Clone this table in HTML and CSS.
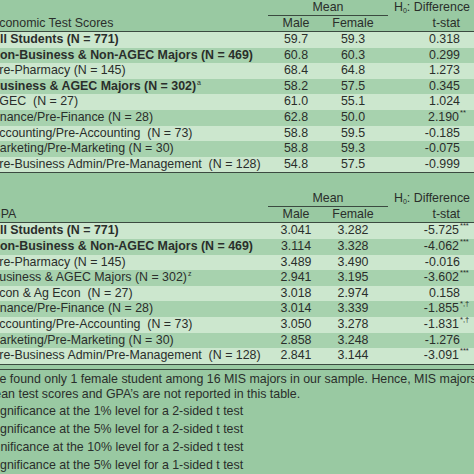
FILE: index.html
```html
<!DOCTYPE html>
<html>
<head>
<meta charset="utf-8">
<link rel="stylesheet" href="styles.css">
</head>
<body>
<div class="page">
  <section class="sec">
    <div class="grid hdr1">
      <div class="mean">Mean</div>
      <div class="h0">H<span class="sub">0</span>: Difference</div>
    </div>
    <div class="grid hdr2">
      <div class="lbl">Economic Test Scores</div>
      <div class="c">Male</div>
      <div class="c">Female</div>
      <div class="t">t-stat</div>
    </div>
    <div class="grid row light"><div class="lbl b">All Students (N = 771)</div><div class="c">59.7</div><div class="c">59.3</div><div class="t">0.318</div></div>
    <div class="grid row dark"><div class="lbl b">Non-Business &amp; Non-AGEC Majors (N = 469)</div><div class="c">60.8</div><div class="c">60.3</div><div class="t">0.299</div></div>
    <div class="grid row light"><div class="lbl">Pre-Pharmacy (N = 145)</div><div class="c">68.4</div><div class="c">64.8</div><div class="t">1.273</div></div>
    <div class="grid row dark"><div class="lbl b">Business &amp; AGEC Majors (N = 302)<span class="sa">a</span></div><div class="c">58.2</div><div class="c">57.5</div><div class="t">0.345</div></div>
    <div class="grid row light"><div class="lbl">AGEC&nbsp; (N = 27)</div><div class="c">61.0</div><div class="c">55.1</div><div class="t">1.024</div></div>
    <div class="grid row dark"><div class="lbl x">Finance/Pre-Finance (N = 28)</div><div class="c">62.8</div><div class="c">50.0</div><div class="t">2.190<span class="sup">**</span></div></div>
    <div class="grid row light"><div class="lbl">Accounting/Pre-Accounting&nbsp; (N = 73)</div><div class="c">58.8</div><div class="c">59.5</div><div class="t">-0.185</div></div>
    <div class="grid row dark"><div class="lbl x">Marketing/Pre-Marketing (N = 30)</div><div class="c">58.8</div><div class="c">59.3</div><div class="t">-0.075</div></div>
    <div class="grid row light"><div class="lbl">Pre-Business Admin/Pre-Management&nbsp; (N = 128)</div><div class="c">54.8</div><div class="c">57.5</div><div class="t">-0.999</div></div>
  </section>

  <section class="sec sec2">
    <div class="grid hdr1">
      <div class="mean">Mean</div>
      <div class="h0">H<span class="sub">0</span>: Difference</div>
    </div>
    <div class="grid hdr2">
      <div class="lbl">GPA</div>
      <div class="c">Male</div>
      <div class="c">Female</div>
      <div class="t">t-stat</div>
    </div>
    <div class="grid row light"><div class="lbl b">All Students (N = 771)</div><div class="c">3.041</div><div class="c">3.282</div><div class="t">-5.725<span class="sup">***</span></div></div>
    <div class="grid row dark"><div class="lbl b">Non-Business &amp; Non-AGEC Majors (N = 469)</div><div class="c">3.114</div><div class="c">3.328</div><div class="t">-4.062<span class="sup">***</span></div></div>
    <div class="grid row light"><div class="lbl">Pre-Pharmacy (N = 145)</div><div class="c">3.489</div><div class="c">3.490</div><div class="t">-0.016</div></div>
    <div class="grid row dark"><div class="lbl">Business &amp; AGEC Majors (N = 302)<span class="sa">z</span></div><div class="c">2.941</div><div class="c">3.195</div><div class="t">-3.602<span class="sup">***</span></div></div>
    <div class="grid row light"><div class="lbl">Econ &amp; Ag Econ&nbsp; (N = 27)</div><div class="c">3.018</div><div class="c">2.974</div><div class="t">0.158</div></div>
    <div class="grid row dark"><div class="lbl x">Finance/Pre-Finance (N = 28)</div><div class="c">3.014</div><div class="c">3.339</div><div class="t">-1.855<span class="sup">*,†</span></div></div>
    <div class="grid row light"><div class="lbl">Accounting/Pre-Accounting&nbsp; (N = 73)</div><div class="c">3.050</div><div class="c">3.278</div><div class="t">-1.831<span class="sup">*,†</span></div></div>
    <div class="grid row dark"><div class="lbl x">Marketing/Pre-Marketing (N = 30)</div><div class="c">2.858</div><div class="c">3.248</div><div class="t">-1.276</div></div>
    <div class="grid row light"><div class="lbl">Pre-Business Admin/Pre-Management&nbsp; (N = 128)</div><div class="c">2.841</div><div class="c">3.144</div><div class="t">-3.091<span class="sup">***</span></div></div>
  </section>

  <div class="notes">
    <div class="note n1">We found only 1 female student among 16 MIS majors in our sample. Hence, MIS majors</div>
    <div class="note n2">mean test scores and GPA’s are not reported in this table.</div>
    <div class="note sig s1">Significance at the 1% level for a 2-sided t test</div>
    <div class="note sig s1">Significance at the 5% level for a 2-sided t test</div>
    <div class="note sig s2">Significance at the 10% level for a 2-sided t test</div>
    <div class="note sig s1">Significance at the 5% level for a 1-sided t test</div>
  </div>
</div>
</body>
</html>
```
FILE: styles.css
```css
html, body {
  margin: 0;
  padding: 0;
  background: #99c9a2;
}
body {
  width: 474px;
  height: 474px;
  overflow: hidden;
  font-family: "Liberation Sans", Arial, sans-serif;
  font-size: 12.4px;
  color: #2a2e2b;
}
.page {
  margin-left: -9px;
  width: 483px;
}
.grid {
  display: grid;
  grid-template-columns: 277px 56px 58px 92px;
}
.hdr1 {
  height: 16px;
}
.mean {
  grid-column: 2 / 4;
  text-align: center;
  line-height: 15px;
  border-bottom: 1px solid #3b4a40;
  margin-right: -6px;
}
.h0 {
  grid-column: 4;
  text-align: right;
  padding-right: 4px;
  line-height: 15px;
  white-space: nowrap;
}
.sub {
  font-size: 7px;
  line-height: 0;
  vertical-align: -2px;
}
.hdr2 {
  height: 15px;
  line-height: 15px;
  border-bottom: 1px solid #3b4a40;
}
.row {
  height: 15.6px;
  line-height: 15.6px;
  overflow: hidden;
}
.light {
  background: #cce7ce;
}
.dark {
  background: #a7d2ae;
}
.c {
  text-align: center;
}
.t {
  text-align: right;
  padding-right: 14px;
  white-space: nowrap;
}
.lbl {
  white-space: nowrap;
}
.lbl.x {
  margin-left: -1.5px;
}
.b {
  font-weight: bold;
}
.sa {
  font-size: 7px;
  line-height: 0;
  vertical-align: 5px;
  font-weight: normal;
  margin-left: 1px;
}
.sup {
  display: inline-block;
  width: 0;
  font-size: 7.5px;
  line-height: 0;
  vertical-align: 6px;
  text-align: left;
  padding-left: 1px;
}
.sec {
  border-bottom: 1px solid #3b4a40;
}
.sec2 {
  margin-top: 18px;
}
.notes {
  margin-top: 4px;
  border-top: 1px solid #3b4a40;
  padding-top: 2px;
}
.note {
  white-space: nowrap;
  line-height: 15px;
}
.n1 {
  text-indent: -3px;
}
.n2 {
  text-indent: -7px;
}
.sig {
  line-height: 18px;
}
.s1 {
  text-indent: -2px;
}
.s2 {
  text-indent: -8.5px;
}
```
